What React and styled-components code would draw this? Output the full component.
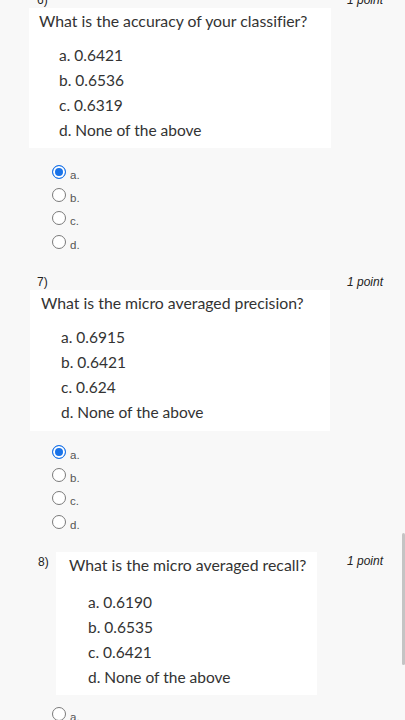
import React from 'react'
import styled, { createGlobalStyle } from 'styled-components'

const GlobalStyle = createGlobalStyle`
    html, body {
        margin: 0;
        padding: 0;
        background: #f8f8f8;
        overflow: hidden;
    }
`

const Page = styled.main`
    width: 405px;
    height: 720px;
    overflow: hidden;
    font-family: "Liberation Sans", Arial, sans-serif;
`

const Feed = styled.div`
    margin-top: -8px;
`

const Question = styled.section`
    margin-bottom: ${p => p.$gap}px;
`

const Header = styled.header`
    display: flex;
    justify-content: space-between;
    align-items: center;
    height: 16px;
    padding: 0 22px 0 37px;
    font-size: 12px;
    color: #222;
`

const Points = styled.span`
    font-style: italic;
    font-size: 12px;
    color: #222;
`

const InlineRow = styled.div`
    display: flex;
    align-items: flex-start;
    padding-right: 22px;

    > span:first-child {
        width: 56px;
        box-sizing: border-box;
        padding: 3px 0 0 38px;
        font-size: 12px;
        color: #222;
    }

    > ${Points} {
        margin-left: auto;
        padding-top: 2px;
    }
`

const Prompt = styled.div`
    background: #fff;
    margin-left: ${p => p.$left}px;
    width: ${p => p.$width}px;
    box-sizing: border-box;
    padding: ${p => p.$top}px 0 ${p => p.$bottom}px ${p => p.$pad}px;
    font-family: Lato, "Open Sans", sans-serif;
    font-variant-ligatures: none;
    color: #333;

    > h3 {
        margin: 0 0 ${p => p.$after}px;
        font-size: 15.8px;
        font-weight: 400;
        line-height: 25px;
    }

    > ol {
        list-style: none;
        margin: 0;
        padding: 0 0 0 ${p => p.$indent}px;

        > li {
            font-size: 15.5px;
            line-height: 25px;
        }
    }
`

const Choices = styled.div`
    margin-top: ${p => p.$top}px;
    padding-left: 52px;
`

const Choice = styled.label`
    display: flex;
    align-items: center;
    height: 23.3px;
    font-size: 11.5px;
    color: #555;

    > span {
        padding-top: 6px;
        padding-left: 4px;
    }
`

const Dot = styled.span`
    width: 14px;
    height: 14px;
    flex: none;
    box-sizing: border-box;
    border-radius: 50%;
    border: 1px solid ${p => (p.$on ? '#1a73e8' : '#7a7a7a')};
    background: ${p => (p.$on ? '#1a73e8' : '#fff')};
    box-shadow: ${p => (p.$on ? 'inset 0 0 0 2px #fff' : 'none')};
`

const Scrollbar = styled.div`
    position: fixed;
    right: 0;
    top: 533px;
    width: 3px;
    height: 132px;
    background: #c4c4c4;
    border-radius: 2px;
`

const questions = [
    {
        num: '6)',
        text: 'What is the accuracy of your classifier?',
        options: ['a. 0.6421', 'b. 0.6536', 'c. 0.6319', 'd. None of the above'],
        picked: 0,
        box: { left: 29, width: 302, pad: 10, indent: 20, top: 0, after: 10, bottom: 5 },
        radios: 12,
        gap: 21,
    },
    {
        num: '7)',
        text: 'What is the micro averaged precision?',
        options: ['a. 0.6915', 'b. 0.6421', 'c. 0.624', 'd. None of the above'],
        picked: 0,
        box: { left: 30, width: 300, pad: 11, indent: 20, top: 0, after: 10, bottom: 6 },
        radios: 9,
        gap: 19,
    },
    {
        num: '8)',
        text: 'What is the micro averaged recall?',
        options: ['a. 0.6190', 'b. 0.6535', 'c. 0.6421', 'd. None of the above'],
        picked: null,
        inline: true,
        box: { left: 0, width: 261, pad: 13, indent: 19, top: 0, after: 13, bottom: 5 },
        radios: 7,
        gap: 0,
    },
]

const letters = ['a.', 'b.', 'c.', 'd.']

const PromptBox = ({ q }) => (
    <Prompt
        $left={q.box.left}
        $width={q.box.width}
        $pad={q.box.pad}
        $indent={q.box.indent}
        $top={q.box.top}
        $after={q.box.after}
        $bottom={q.box.bottom}
    >
        <h3>{q.text}</h3>
        <ol>
            {q.options.map(o => (
                <li key={o}>{o}</li>
            ))}
        </ol>
    </Prompt>
)

const App = () => {
    return (
        <Page>
            <GlobalStyle />
            <Feed>
                {questions.map(q => (
                    <Question key={q.num} $gap={q.gap}>
                        {q.inline ? (
                            <InlineRow>
                                <span>{q.num}</span>
                                <PromptBox q={q} />
                                <Points>1 point</Points>
                            </InlineRow>
                        ) : (
                            <>
                                <Header>
                                    <span>{q.num}</span>
                                    <Points>1 point</Points>
                                </Header>
                                <PromptBox q={q} />
                            </>
                        )}
                        <Choices $top={q.radios}>
                            {letters.map((l, i) => (
                                <Choice key={l}>
                                    <Dot $on={q.picked === i} />
                                    <span>{l}</span>
                                </Choice>
                            ))}
                        </Choices>
                    </Question>
                ))}
            </Feed>
            <Scrollbar />
        </Page>
    )
}

export default App
